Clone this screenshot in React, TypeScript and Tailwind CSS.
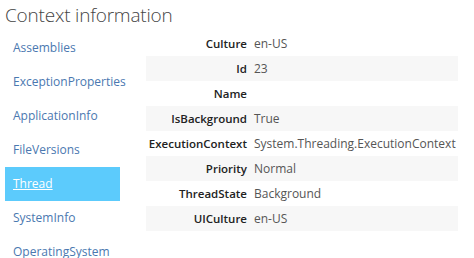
const links = [
  "Assemblies",
  "ExceptionProperties",
  "ApplicationInfo",
  "FileVersions",
  "Thread",
  "SystemInfo",
  "OperatingSystem",
];

const rows: [string, string][] = [
  ["Culture", "en-US"],
  ["Id", "23"],
  ["Name", ""],
  ["IsBackground", "True"],
  ["ExecutionContext", "System.Threading.ExecutionContext"],
  ["Priority", "Normal"],
  ["ThreadState", "Background"],
  ["UICulture", "en-US"],
];

export default function App() {
  return (
    <div className="w-[474px] h-[258px] bg-white overflow-hidden font-['Open_Sans',sans-serif]">
      <h1 className="pl-[5px] pt-[2px] text-[19px] leading-[26px] font-light tracking-[-0.2px] text-[#444]">Context information</h1>
      <div className="flex items-start mt-[3px]">
        <ul className="w-[146px] pl-[5px] flex flex-col">
          {links.map((l) => (
            <li key={l} className={`w-[115px] h-[34px] flex items-center pl-[8px] text-[12px] ${l === "Thread" ? "bg-[#5ccbfc] text-white underline" : "text-[#4a78b0]"}`}>
              {l}
            </li>
          ))}
        </ul>
        <div className="w-[312px] flex flex-col text-[12px]">
          {rows.map(([k, v], i) => (
            <div key={k} className={`h-[25px] flex items-center ${i % 2 === 1 ? "bg-[#f7f7f7]" : ""}`}>
              <span className="w-[102px] pr-[1px] text-right text-[11.5px] font-semibold text-[#222]">{k}</span>
              <span className="pl-[6px] text-[#555]">{v}</span>
            </div>
          ))}
        </div>
      </div>
    </div>
  );
}
